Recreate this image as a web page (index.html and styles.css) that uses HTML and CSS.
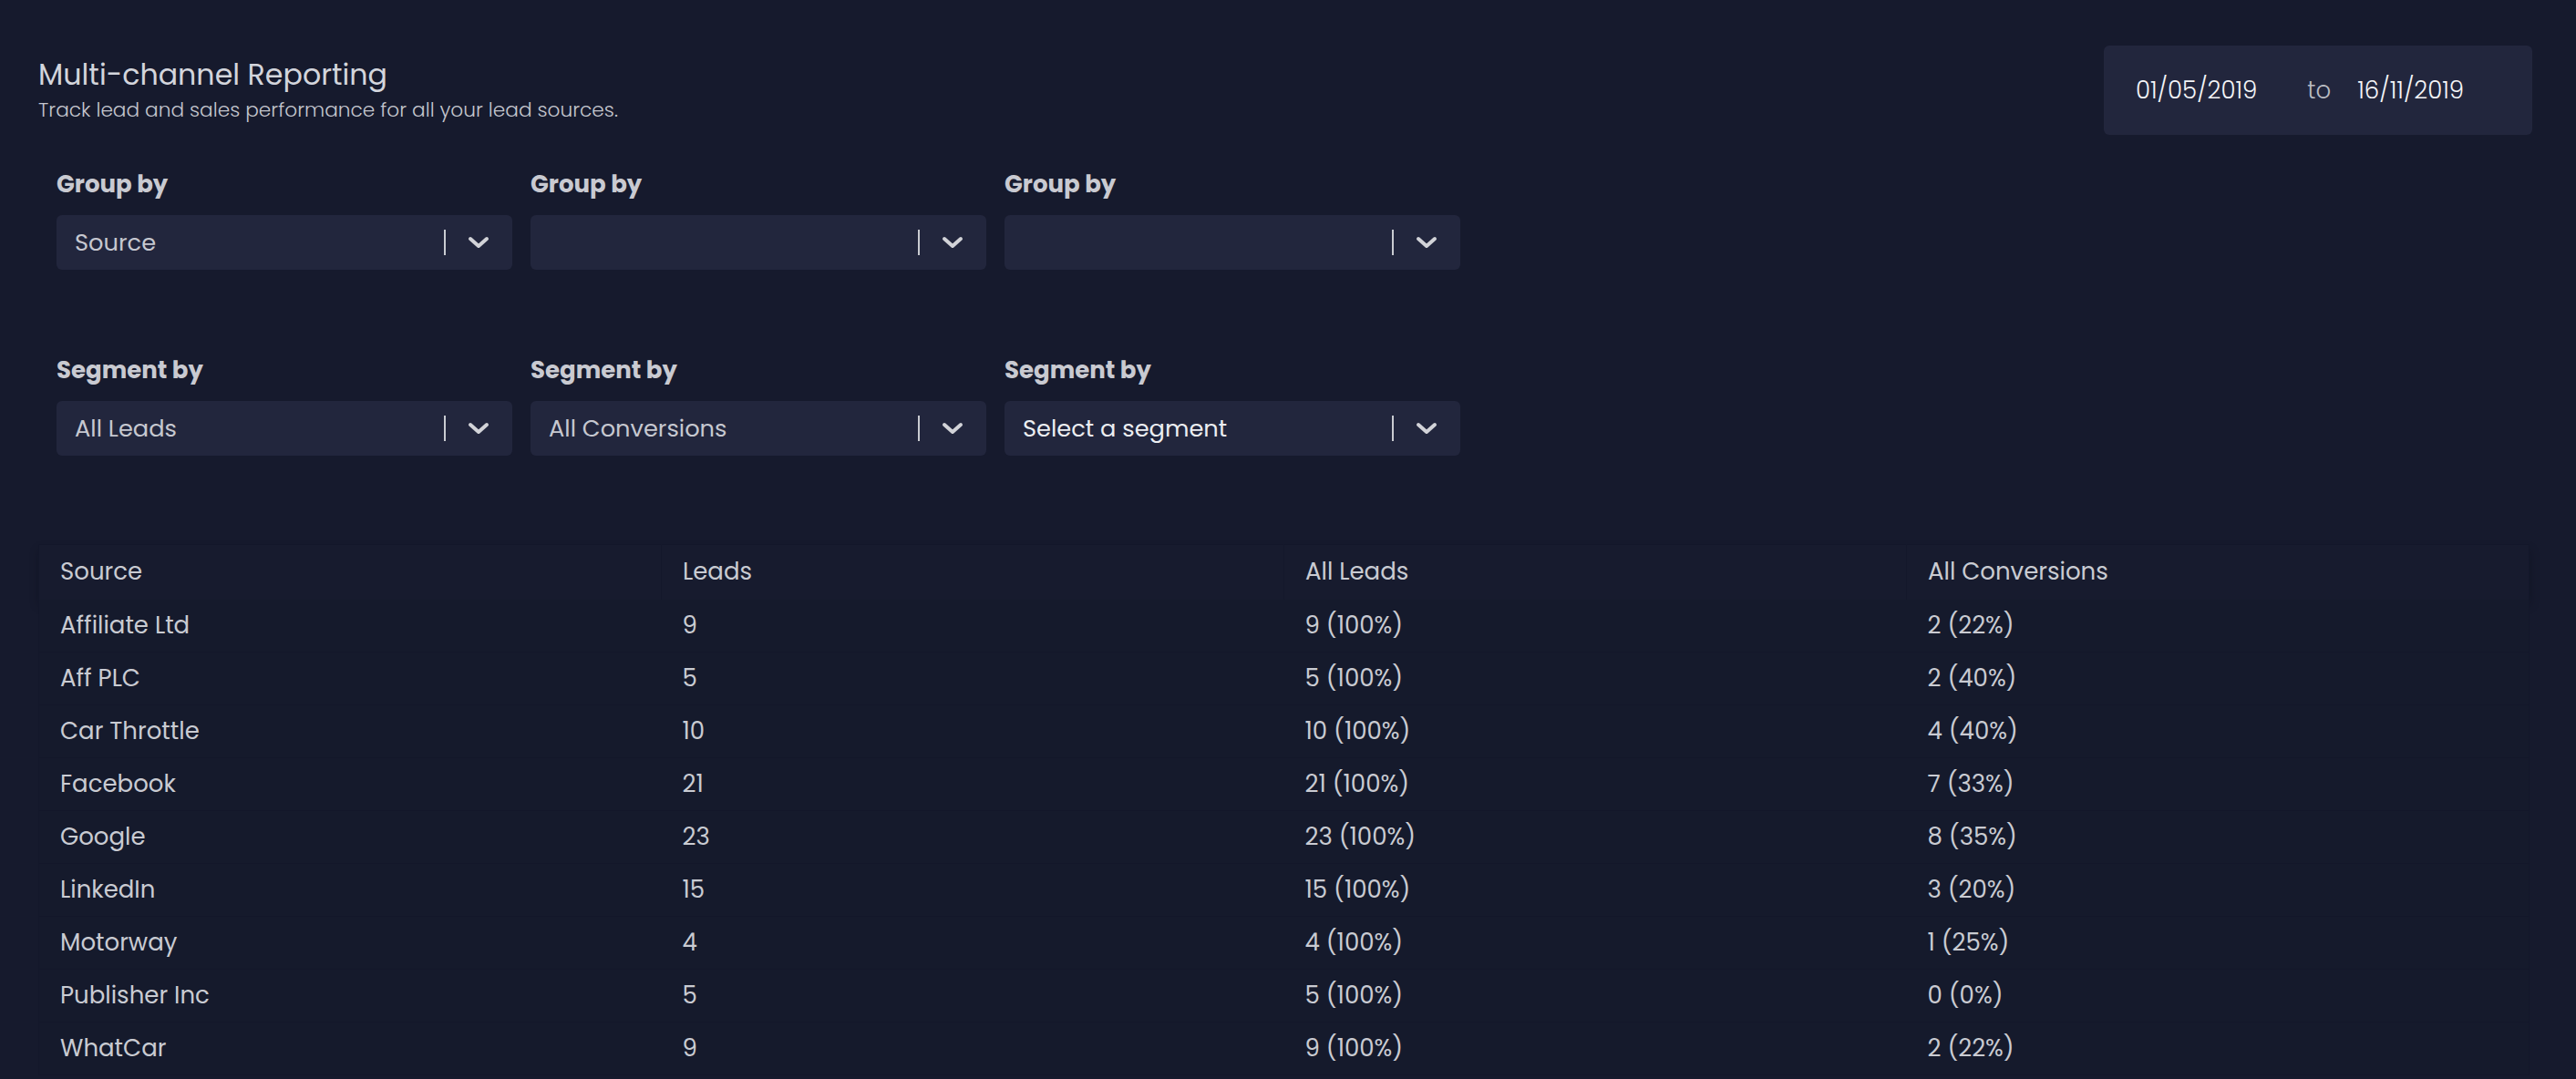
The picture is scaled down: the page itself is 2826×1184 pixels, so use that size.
FILE: index.html
```html
<!DOCTYPE html>
<html lang="en">
<head>
<meta charset="utf-8">
<title>Multi-channel Reporting</title>
<link rel="stylesheet" href="styles.css">
</head>
<body>
<div class="page">
  <header class="top">
    <div class="heading">
      <h1 class="title">Multi-channel Reporting</h1>
      <p class="subtitle">Track lead and sales performance for all your lead sources.</p>
    </div>
    <div class="dates">
      <span class="date">01/05/2019</span>
      <span class="to">to</span>
      <span class="date">16/11/2019</span>
    </div>
  </header>

  <section class="filters">
    <div class="filter-row">
      <div class="field">
        <div class="label">Group by</div>
        <div class="select"><span class="value">Source</span><span class="sep"></span><svg class="chev" viewBox="0 0 24 14"><path d="M3 3 L12 11 L21 3"/></svg></div>
      </div>
      <div class="field">
        <div class="label">Group by</div>
        <div class="select"><span class="value"></span><span class="sep"></span><svg class="chev" viewBox="0 0 24 14"><path d="M3 3 L12 11 L21 3"/></svg></div>
      </div>
      <div class="field">
        <div class="label">Group by</div>
        <div class="select"><span class="value"></span><span class="sep"></span><svg class="chev" viewBox="0 0 24 14"><path d="M3 3 L12 11 L21 3"/></svg></div>
      </div>
    </div>
    <div class="filter-row">
      <div class="field">
        <div class="label">Segment by</div>
        <div class="select"><span class="value">All Leads</span><span class="sep"></span><svg class="chev" viewBox="0 0 24 14"><path d="M3 3 L12 11 L21 3"/></svg></div>
      </div>
      <div class="field">
        <div class="label">Segment by</div>
        <div class="select"><span class="value">All Conversions</span><span class="sep"></span><svg class="chev" viewBox="0 0 24 14"><path d="M3 3 L12 11 L21 3"/></svg></div>
      </div>
      <div class="field">
        <div class="label">Segment by</div>
        <div class="select"><span class="value placeholder">Select a segment</span><span class="sep"></span><svg class="chev" viewBox="0 0 24 14"><path d="M3 3 L12 11 L21 3"/></svg></div>
      </div>
    </div>
  </section>

  <table class="report">
    <thead>
      <tr><th>Source</th><th>Leads</th><th>All Leads</th><th>All Conversions</th></tr>
    </thead>
    <tbody>
      <tr><td>Affiliate Ltd</td><td>9</td><td>9 (100%)</td><td>2 (22%)</td></tr>
      <tr><td>Aff PLC</td><td>5</td><td>5 (100%)</td><td>2 (40%)</td></tr>
      <tr><td>Car Throttle</td><td>10</td><td>10 (100%)</td><td>4 (40%)</td></tr>
      <tr><td>Facebook</td><td>21</td><td>21 (100%)</td><td>7 (33%)</td></tr>
      <tr><td>Google</td><td>23</td><td>23 (100%)</td><td>8 (35%)</td></tr>
      <tr><td>LinkedIn</td><td>15</td><td>15 (100%)</td><td>3 (20%)</td></tr>
      <tr><td>Motorway</td><td>4</td><td>4 (100%)</td><td>1 (25%)</td></tr>
      <tr><td>Publisher Inc</td><td>5</td><td>5 (100%)</td><td>0 (0%)</td></tr>
      <tr><td>WhatCar</td><td>9</td><td>9 (100%)</td><td>2 (22%)</td></tr>
    </tbody>
  </table>
</div>
</body>
</html>
```

FILE: styles.css
```css
* { box-sizing: border-box; }

html, body {
  margin: 0;
  padding: 0;
  background: #161a2d;
}

body {
  font-family: "Poppins", "Inter", "Noto Sans", sans-serif;
  color: #c9cbd2;
  overflow: hidden;
}

.page {
  padding: 50px 48px 0 42px;
}

.top {
  display: flex;
  justify-content: space-between;
  align-items: flex-start;
}

.heading {
  padding-top: 12px;
}

.title {
  margin: 0;
  font-size: 31.7px;
  line-height: 40px;
  font-weight: 400;
  color: #d3d5dc;
}

.subtitle {
  margin: 4px 0 0;
  font-size: 21.7px;
  line-height: 30px;
  font-weight: 300;
  color: #c4c6ce;
}

.dates {
  width: 470px;
  height: 98px;
  background: #22263d;
  border-radius: 6px;
  display: flex;
  align-items: center;
  padding-left: 35px;
  font-size: 26px;
  font-weight: 300;
}

.date {
  color: #f4f5f8;
}

.to {
  color: #b9bbc3;
  margin: 0 29px 0 55px;
}

.filters {
  padding-left: 20px;
  margin-top: 39px;
}

.filter-row {
  display: flex;
  gap: 20px;
}

.filter-row + .filter-row {
  margin-top: 95px;
}

.field {
  width: 500px;
}

.label {
  font-size: 26px;
  line-height: 30px;
  font-weight: 700;
  color: #c9cad1;
}

.select {
  margin-top: 19px;
  height: 60px;
  background: #22263d;
  border-radius: 6px;
  display: flex;
  align-items: center;
  padding: 0 25px 0 20px;
}

.value {
  flex: 1;
  font-size: 25.7px;
  font-weight: 400;
  color: #c6c8d0;
}

.value.placeholder {
  color: #eceef2;
}

.sep {
  width: 2px;
  height: 28px;
  background: #c9cbd1;
  margin-right: 24px;
}

.chev {
  width: 24px;
  height: 14px;
  fill: none;
  stroke: #d2d3d8;
  stroke-width: 4;
  stroke-linecap: round;
  stroke-linejoin: round;
}

.report {
  margin-top: 97px;
  width: calc(100% - 3px);
  table-layout: fixed;
  border-collapse: collapse;
  border: 1px solid #13172a;
  font-size: 26px;
  color: #c9cbd2;
}

.report th,
.report td {
  text-align: left;
  font-weight: 400;
  padding: 0 0 0 23px;
}

.report thead tr {
  background: #171b2e;
  box-shadow: 0 6px 10px rgba(8, 10, 20, 0.3);
}

.report th {
  height: 60px;
  border-right: 1px solid #14182b;
}

.report th:last-child {
  border-right: none;
}

.report tbody tr {
  background: #151a2c;
  border-bottom: 1px solid #13172a;
}

.report td {
  height: 58px;
}
```
